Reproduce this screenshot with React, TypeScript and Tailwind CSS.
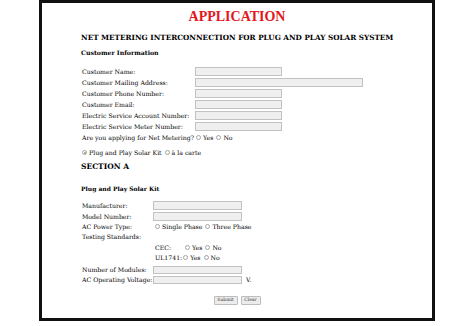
import React from "react";

const Radio = ({ checked = false }: { checked?: boolean }) => (
  <span className="inline-flex h-[5px] w-[5px] shrink-0 items-center justify-center rounded-full border border-[#a3a3a3] bg-white">
    {checked && <span className="h-[2px] w-[2px] rounded-full bg-[#8c9a86]" />}
  </span>
);

const Opt = ({ text, checked = false }: { text: string; checked?: boolean }) => (
  <span className="mr-[3px] inline-flex items-center gap-[2px]">
    <Radio checked={checked} />
    <span>{text}</span>
  </span>
);

const Field = ({ w = "w-[87px]", h = "h-[9px]" }: { w?: string; h?: string }) => (
  <input
    type="text"
    className={`block ${w} ${h} border border-[#c2c2c2] bg-[#efefef] p-0 outline-none`}
  />
);

const customerRows = [
  { label: "Customer Name:", w: "w-[87px]" },
  { label: "Customer Mailing Address:", w: "w-[168px]" },
  { label: "Customer Phone Number:", w: "w-[87px]" },
  { label: "Customer Email:", w: "w-[87px]" },
  { label: "Electric Service Account Number:", w: "w-[87px]" },
  { label: "Electric Service Meter Number:", w: "w-[87px]" },
];

export default function App() {
  return (
    <div className="h-[326px] w-[474px] overflow-hidden bg-white font-['DejaVu_Serif',serif] text-[6.2px] text-black">
      <div className="mx-auto flex h-[321px] w-[396px] flex-col border-[3px] border-[#111] pt-[6px]">
        <h1 className="h-[16px] text-center font-['Liberation_Serif',serif] text-[14px] font-bold leading-[16px] text-[#e3161d]">
          APPLICATION
        </h1>

        <div className="mt-[7.5px] pl-[39px] text-[7.25px] font-bold leading-[10px]">
          NET METERING INTERCONNECTION FOR PLUG AND PLAY SOLAR SYSTEM
        </div>
        <div className="mt-[5.5px] pl-[39px] text-[6.2px] font-bold leading-[10px]">
          Customer Information
        </div>

        {/* customer table */}
        <div className="mt-[8px] flex flex-col pl-[40px]">
          {customerRows.map((r) => (
            <div key={r.label} className="flex h-[11px] items-center">
              <span className="w-[113px]">{r.label}</span>
              <Field w={r.w} />
            </div>
          ))}
          <div className="flex h-[11px] items-center">
            <span className="w-[114px] whitespace-nowrap">Are you applying for Net Metering?</span>
            <Opt text="Yes" />
            <Opt text="No" />
          </div>
        </div>

        <div className="mt-[5px] flex h-[10px] items-center pl-[40px]">
          <Opt text="Plug and Play Solar Kit" checked />
          <Opt text="à la carte" />
        </div>

        <div className="mt-[3.5px] pl-[39px] text-[7.5px] font-bold leading-[10px]">SECTION A</div>
        <div className="mt-[12.5px] pl-[39px] text-[6px] font-bold leading-[10px]">
          Plug and Play Solar Kit
        </div>

        {/* kit table */}
        <div className="mt-[6px] flex flex-col pl-[40px]">
          <div className="flex h-[11px] items-center">
            <span className="w-[71px]">Manufacturer:</span>
            <Field w="w-[89px]" />
          </div>
          <div className="flex h-[11px] items-center">
            <span className="w-[71px]">Model Number:</span>
            <Field w="w-[89px]" />
          </div>
          <div className="flex h-[10px] items-center">
            <span className="w-[73px]">AC Power Type:</span>
            <Opt text="Single Phase" />
            <Opt text="Three Phase" />
          </div>
          <div className="flex h-[9px] items-center">Testing Standards:</div>
          <div className="mt-[2px] flex flex-col pl-[73px]">
            <div className="flex h-[10px] items-center">
              <span className="w-[30px]">CEC:</span>
              <Opt text="Yes" />
              <Opt text="No" />
            </div>
            <div className="flex h-[9px] items-center">
              <span className="mr-[1px] whitespace-nowrap">UL1741:</span>
              <Opt text="Yes" />
              <Opt text="No" />
            </div>
          </div>
          <div className="mt-[3px] flex h-[10px] items-center">
            <span className="w-[71px]">Number of Modules:</span>
            <Field w="w-[89px]" h="h-[8px]" />
          </div>
          <div className="flex h-[9px] items-center">
            <span className="w-[71px] whitespace-nowrap">AC Operating Voltage:</span>
            <Field w="w-[89px]" h="h-[8px]" />
            <span className="ml-[4px]">V.</span>
          </div>
        </div>

        <div className="mt-[12px] flex justify-center gap-[3px]">
          <button className="h-[9px] w-[24px] rounded-[1px] border border-[#bdbdbd] bg-[#ececec] p-0 text-[4.5px] leading-none text-[#333]">
            Submit
          </button>
          <button className="h-[9px] w-[20px] rounded-[1px] border border-[#bdbdbd] bg-[#ececec] p-0 text-[4.5px] leading-none text-[#333]">
            Clear
          </button>
        </div>
      </div>
    </div>
  );
}
